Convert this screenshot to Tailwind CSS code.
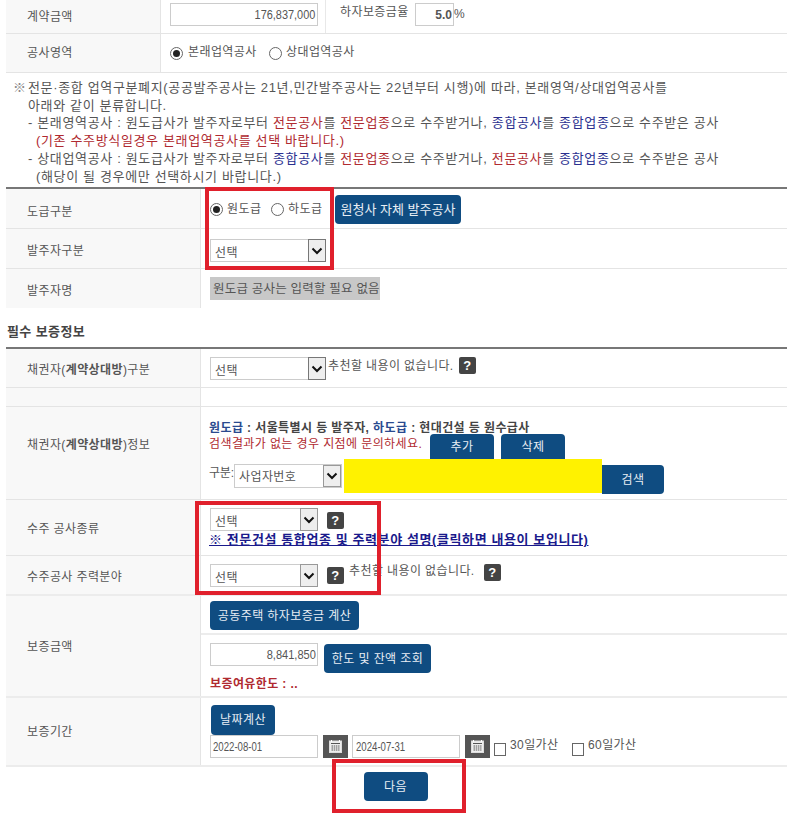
<!DOCTYPE html>
<html lang="ko">
<head>
<meta charset="utf-8">
<script src="https://cdn.jsdelivr.net/npm/@tailwindcss/browser@4"></script>
</head>
<body class="bg-white">
<div class="relative w-[800px] h-[816px] overflow-hidden pl-[6px] font-['Liberation_Sans','Noto_Sans_CJK_KR',sans-serif] text-[12px] leading-[16px] tracking-[0.4px] text-[#555]">

  <!-- top table -->
  <div class="w-[781px]">
    <div class="flex h-[34px] border-b border-[#e4e4e4]">
      <div class="w-[155px] bg-[#f8f8f8] border-r border-[#e4e4e4] pl-[21px] flex items-center">계약금액</div>
      <div class="flex-1 flex items-start pt-[3px] pl-[9px] whitespace-nowrap">
        <div class="w-[148px] h-[23px] border border-[#ccc] flex items-center justify-end pr-[2px]"><span class="inline-block origin-right scale-x-[0.84] text-[13px] tracking-normal">176,837,000</span></div>
        <div class="w-[8px] h-[33px] -mt-[3px] mr-[14px] border-r border-[#e8e8e8]"></div>
        <span class="mt-[1px] w-[75px]">하자보증금율</span>
        <div class="w-[39px] h-[23px] border border-[#ccc] flex items-center justify-end pr-[1px] font-bold tracking-normal">5.0</div>
        <span class="mt-[3px] tracking-normal">%</span>
      </div>
    </div>
    <div class="flex h-[39px] border-b border-[#e4e4e4]">
      <div class="w-[155px] bg-[#f8f8f8] border-r border-[#e4e4e4] pl-[21px] flex items-center">공사영역</div>
      <div class="flex-1 flex items-center pl-[9px] whitespace-nowrap">
        <span class="w-[13px] h-[13px] rounded-full border border-[#666] flex items-center justify-center"><span class="w-[7px] h-[7px] rounded-full bg-[#222]"></span></span>
        <span class="ml-[5px] -mt-[2px] w-[69px]">본래업역공사</span>
        <span class="ml-[12px] w-[13px] h-[13px] rounded-full border border-[#666]"></span>
        <span class="ml-[4px] -mt-[2px]">상대업역공사</span>
      </div>
    </div>
    <div class="h-[114px] pt-[6px] pl-[7px] text-[13px] leading-[17.7px] tracking-[0.65px] whitespace-nowrap">
      <p><span class="inline-block w-[15px] text-[#888] tracking-normal">※</span>전문·종합 업역구분폐지(공공발주공사는 21년,민간발주공사는 22년부터 시행)에 따라, 본래영역/상대업역공사를</p>
      <p class="pl-[15px]">아래와 같이 분류합니다.</p>
      <p class="pl-[15px]">- 본래영역공사 : 원도급사가 발주자로부터 <span class="text-[#b02a30]">전문공사</span>를 <span class="text-[#b02a30]">전문업종</span>으로 수주받거나, <span class="text-[#2a2f8f]">종합공사</span>를 <span class="text-[#2a2f8f]">종합업종</span>으로 수주받은 공사</p>
      <p class="pl-[23px] text-[#b02a30]">(기존 수주방식일경우 본래업역공사를 선택 바랍니다.)</p>
      <p class="pl-[15px]">- 상대업역공사 : 원도급사가 발주자로부터 <span class="text-[#2a2f8f]">종합공사</span>를 <span class="text-[#b02a30]">전문업종</span>으로 수주받거나, <span class="text-[#b02a30]">전문공사</span>를 <span class="text-[#2a2f8f]">종합업종</span>으로 수주받은 공사</p>
      <p class="pl-[23px]">(해당이 될 경우에만 선택하시기 바랍니다.)</p>
    </div>
    <div class="border-t-2 border-[#777]">
      <div class="flex h-[40px] border-b border-[#e4e4e4]">
        <div class="w-[195px] bg-[#f8f8f8] border-r border-[#e4e4e4] pl-[21px] pt-[6px] flex items-center">도급구분</div>
        <div class="flex-1 flex items-start pl-[9px] whitespace-nowrap">
          <span class="mt-[14px] w-[13px] h-[13px] rounded-full border border-[#666] flex items-center justify-center"><span class="w-[7px] h-[7px] rounded-full bg-[#222]"></span></span>
          <span class="ml-[4px] mt-[12px] w-[37px]">원도급</span>
          <span class="ml-[7px] mt-[14px] w-[13px] h-[13px] rounded-full border border-[#666]"></span>
          <span class="ml-[4px] mt-[12px] w-[37px]">하도급</span>
          <button class="ml-[10px] mt-[6px] w-[126px] h-[29px] rounded-[4px] bg-[#0f4c81] text-[#e8eef4] text-[13px] tracking-normal">원청사 자체 발주공사</button>
        </div>
      </div>
      <div class="flex h-[40px] border-b border-[#e4e4e4]">
        <div class="w-[195px] bg-[#f8f8f8] border-r border-[#e4e4e4] pl-[21px] pt-[4px] flex items-center">발주자구분</div>
        <div class="flex-1 pl-[9px] pt-[10px]">
          <div class="w-[116px] h-[23px] border border-[#ccc] flex items-center justify-between pl-[4px]"><span class="mt-[4px]">선택</span>
            <span class="w-[18px] h-[23px] -mr-px border border-[#777] bg-[#eee] flex items-center justify-center"><svg width="12" height="8" viewBox="0 0 12 8"><path d="M1.5 1.5 6 6l4.5-4.5" fill="none" stroke="#111" stroke-width="2"/></svg></span>
          </div>
        </div>
      </div>
      <div class="flex h-[39px]">
        <div class="w-[195px] bg-[#f8f8f8] border-r border-[#e4e4e4] pl-[21px] pt-[5px] flex items-center">발주자명</div>
        <div class="flex-1 pl-[9px] pt-[8px]">
          <div class="w-[170px] h-[23px] bg-[#c8c8c8] flex items-center pl-[3px] text-[12.5px] tracking-[0.2px] whitespace-nowrap">원도급 공사는 입력할 필요 없음</div>
        </div>
      </div>
    </div>
  </div>

  <h2 class="h-[39px] pt-[16px] pl-[1px] font-bold text-[13px] text-[#444]">필수 보증정보</h2>

  <!-- bottom table -->
  <div class="w-[781px] border-t-2 border-[#777]">
    <div class="flex h-[39px] border-b border-[#e4e4e4]">
      <div class="w-[195px] bg-[#f8f8f8] border-r border-[#e4e4e4] pl-[21px] pt-[3px] flex items-center"><span>채권자(<b>계약상대방</b>)구분</span></div>
      <div class="flex-1 flex items-start pl-[9px] pt-[8px] whitespace-nowrap">
        <div class="w-[116px] h-[23px] border border-[#ccc] flex items-center justify-between pl-[4px]"><span class="mt-[4px]">선택</span>
          <span class="w-[18px] h-[23px] -mr-px border border-[#777] bg-[#eee] flex items-center justify-center"><svg width="12" height="8" viewBox="0 0 12 8"><path d="M1.5 1.5 6 6l4.5-4.5" fill="none" stroke="#111" stroke-width="2"/></svg></span>
        </div>
        <span class="ml-[2px] mt-[1px] w-[127px]">추천할 내용이 없습니다.</span>
        <span class="ml-[4px] w-[17px] h-[17px] rounded-[2px] bg-[#444] text-white font-bold text-[13px] flex items-center justify-center">?</span>
      </div>
    </div>
    <div class="flex h-[19px] border-b border-[#e4e4e4]">
      <div class="w-[195px] bg-[#f8f8f8] border-r border-[#e4e4e4]"></div>
    </div>
    <div class="flex h-[93px] border-b border-[#e4e4e4]">
      <div class="w-[195px] bg-[#f8f8f8] border-r border-[#e4e4e4] pl-[21px] pb-[16px] flex items-center"><span>채권자(<b>계약상대방</b>)정보</span></div>
      <div class="flex-1 pl-[8px] pt-[13px] whitespace-nowrap">
        <p class="font-bold text-[#444]"><span class="text-[#2a4a8f]">원도급</span> : 서울특별시 등 발주자, <span class="text-[#2a4a8f]">하도급</span> : 현대건설 등 원수급사</p>
        <div class="flex items-start">
          <span class="w-[221px] text-[#b02a30]">검색결과가 없는 경우 지점에 문의하세요.</span>
          <button class="w-[64px] h-[26px] mt-[-2px] rounded-t-[4px] bg-[#0f4c81] text-[#e8eef4]">추가</button>
          <button class="ml-[7px] w-[64px] h-[26px] mt-[-2px] rounded-t-[4px] bg-[#0f4c81] text-[#e8eef4]">삭제</button>
        </div>
        <div class="flex items-start -mt-[1px]">
          <span class="mt-[6px] w-[25px] tracking-[-0.2px]">구분:</span>
          <div class="mt-[5px] w-[108px] h-[24px] border border-[#ccc] flex items-start justify-between pl-[4px] pt-[4px]">사업자번호
            <span class="w-[18px] h-[22px] -mt-[4px] border border-[#999] bg-[#eee] flex items-center justify-center"><svg width="12" height="8" viewBox="0 0 12 8"><path d="M1.5 1.5 6 6l4.5-4.5" fill="none" stroke="#111" stroke-width="2"/></svg></span>
          </div>
          <div class="ml-[2px] w-[258px] h-[34px] bg-[#fff200]"></div>
          <button class="mt-[6px] w-[62px] h-[29px] rounded-r-[4px] bg-[#0f4c81] text-[#e8eef4]">검색</button>
        </div>
      </div>
    </div>
    <div class="flex h-[56px] border-b border-[#e4e4e4]">
      <div class="w-[195px] bg-[#f8f8f8] border-r border-[#e4e4e4] pl-[21px] pt-[2px] flex items-center">수주 공사종류</div>
      <div class="flex-1 pl-[9px] pt-[8px] whitespace-nowrap">
        <div class="flex items-start">
          <div class="w-[108px] h-[23px] border border-[#ccc] flex items-center justify-between pl-[4px]"><span class="mt-[4px]">선택</span>
            <span class="w-[18px] h-[23px] -mr-px border border-[#999] bg-[#eee] flex items-center justify-center"><svg width="12" height="8" viewBox="0 0 12 8"><path d="M1.5 1.5 6 6l4.5-4.5" fill="none" stroke="#111" stroke-width="2"/></svg></span>
          </div>
          <span class="ml-[9px] mt-[4px] w-[17px] h-[17px] rounded-[2px] bg-[#444] text-white font-bold text-[13px] flex items-center justify-center">?</span>
        </div>
        <a class="block -ml-px mt-[1px] font-bold underline text-[#1a1a8c] text-[13px] tracking-[0.6px]">※ 전문건설 통합업종 및 주력분야 설명(클릭하면 내용이 보입니다)</a>
      </div>
    </div>
    <div class="flex h-[40px] border-b-2 border-[#ececec]">
      <div class="w-[195px] bg-[#f8f8f8] border-r border-[#e4e4e4] pl-[21px] pt-[3px] flex items-center">수주공사 주력분야</div>
      <div class="flex-1 flex items-start pl-[9px] pt-[8px] whitespace-nowrap">
        <div class="w-[108px] h-[23px] border border-[#ccc] flex items-center justify-between pl-[4px]"><span class="mt-[4px]">선택</span>
          <span class="w-[18px] h-[23px] -mr-px border border-[#999] bg-[#eee] flex items-center justify-center"><svg width="12" height="8" viewBox="0 0 12 8"><path d="M1.5 1.5 6 6l4.5-4.5" fill="none" stroke="#111" stroke-width="2"/></svg></span>
        </div>
        <span class="ml-[9px] mt-[3px] w-[17px] h-[17px] rounded-[2px] bg-[#444] text-white font-bold text-[13px] flex items-center justify-center">?</span>
        <span class="ml-[5px] -mt-px w-[128px]">추천할 내용이 없습니다.</span>
        <span class="ml-[7px] w-[17px] h-[17px] rounded-[2px] bg-[#444] text-white font-bold text-[13px] flex items-center justify-center">?</span>
      </div>
    </div>
    <div class="flex h-[102px] border-b-2 border-[#ececec]">
      <div class="w-[195px] bg-[#f8f8f8] border-r border-[#e4e4e4] pl-[21px] pt-[2px] flex items-center">보증금액</div>
      <div class="flex-1 whitespace-nowrap">
        <div class="h-[39px] border-b-2 border-[#ececec] pl-[9px] pt-[5px]">
          <button class="w-[149px] h-[29px] rounded-[4px] bg-[#0f4c81] text-[#e8eef4]">공동주택 하자보증금 계산</button>
        </div>
        <div class="flex items-start pl-[9px] pt-[8px]">
          <div class="w-[108px] h-[23px] border border-[#ccc] flex items-center justify-end pr-[1px]"><span class="inline-block origin-right scale-x-[0.85] text-[13px] tracking-normal">8,841,850</span></div>
          <button class="ml-[6px] mt-[1px] w-[107px] h-[29px] rounded-[4px] bg-[#0f4c81] text-[#e8eef4]">한도 및 잔액 조회</button>
        </div>
        <p class="pl-[9px] mt-[3px] font-bold text-[#b02a30]">보증여유한도 : ..</p>
      </div>
    </div>
    <div class="flex h-[69px] border-b-2 border-[#ececec]">
      <div class="w-[195px] bg-[#f8f8f8] border-r border-[#e4e4e4] pl-[21px] flex items-center">보증기간</div>
      <div class="flex-1 pl-[9px] pt-[7px] whitespace-nowrap">
        <button class="block ml-px w-[64px] h-[30px] rounded-[4px] bg-[#0f4c81] text-[#e8eef4]">날짜계산</button>
        <div class="flex items-start">
          <div class="w-[108px] h-[23px] border border-[#ccc] flex items-center pl-[2px]"><span class="inline-block origin-left scale-x-[0.74] text-[13px] tracking-normal">2022-08-01</span></div>
          <span class="ml-[5px] w-[25px] h-[23px] bg-[#555] flex items-center justify-center"><svg width="13" height="13" viewBox="0 0 13 13"><rect x=".5" y="1" width="12" height="11.5" fill="#eee" stroke="#ddd"/><rect x="2" y="0" width="1" height="2" fill="#fff"/><rect x="10" y="0" width="1" height="2" fill="#fff"/><path d="M2 3.5h9" stroke="#555"/><path d="M2.5 6h8M2.5 8h8M2.5 10h8" stroke="#555" stroke-dasharray="1.5 .7"/></svg></span>
          <div class="ml-[4px] w-[108px] h-[23px] border border-[#ccc] flex items-center pl-[3px]"><span class="inline-block origin-left scale-x-[0.74] text-[13px] tracking-normal">2024-07-31</span></div>
          <span class="ml-[5px] w-[25px] h-[23px] bg-[#555] flex items-center justify-center"><svg width="13" height="13" viewBox="0 0 13 13"><rect x=".5" y="1" width="12" height="11.5" fill="#eee" stroke="#ddd"/><rect x="2" y="0" width="1" height="2" fill="#fff"/><rect x="10" y="0" width="1" height="2" fill="#fff"/><path d="M2 3.5h9" stroke="#555"/><path d="M2.5 6h8M2.5 8h8M2.5 10h8" stroke="#555" stroke-dasharray="1.5 .7"/></svg></span>
          <span class="ml-[4px] mt-[8px] w-[12px] h-[13px] border border-[#666]"></span>
          <span class="ml-[4px] mt-[2px] w-[47px]">30일가산</span>
          <span class="ml-[15px] mt-[8px] w-[12px] h-[13px] border border-[#666]"></span>
          <span class="ml-[4px] mt-[2px]">60일가산</span>
        </div>
      </div>
    </div>
    <div class="flex justify-center pt-[5px]">
      <button class="ml-[-2px] w-[64px] h-[29px] rounded-[4px] bg-[#0f4c81] text-[#e8eef4]">다음</button>
    </div>
  </div>

  <!-- annotation overlays -->
  <div class="absolute left-[205px] top-[187px] w-[129px] h-[83px] border-[4px] border-[#e0202c] pointer-events-none"></div>
  <div class="absolute left-[195px] top-[501px] w-[186px] h-[94px] border-[4px] border-[#e0202c] pointer-events-none"></div>
  <div class="absolute left-[332px] top-[759px] w-[134px] h-[54px] border-[4px] border-[#e0202c] pointer-events-none"></div>
</div>
</body>
</html>
